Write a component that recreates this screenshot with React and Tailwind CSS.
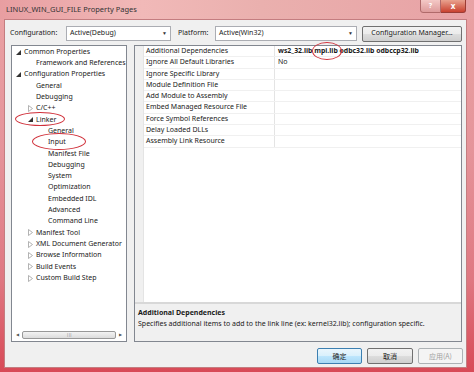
import React from "react";

const Tri = ({ open }) =>
  open ? (
    <svg width="5" height="5" viewBox="0 0 5 5" className="shrink-0">
      <path d="M5 0 L5 5 L0 5 Z" fill="#333" />
    </svg>
  ) : (
    <svg width="5" height="7" viewBox="0 0 5 7" className="shrink-0">
      <path d="M0.5 0.5 L4.5 3.5 L0.5 6.5 Z" fill="none" stroke="#a0a0a0" strokeWidth="0.8" />
    </svg>
  );

const tree = [
  { t: "Common Properties", l: 0, a: "open" },
  { t: "Framework and References", l: 1 },
  { t: "Configuration Properties", l: 0, a: "open" },
  { t: "General", l: 1 },
  { t: "Debugging", l: 1 },
  { t: "C/C++", l: 1, a: "closed" },
  { t: "Linker", l: 1, a: "open" },
  { t: "General", l: 2 },
  { t: "Input", l: 2, sel: true },
  { t: "Manifest File", l: 2 },
  { t: "Debugging", l: 2 },
  { t: "System", l: 2 },
  { t: "Optimization", l: 2 },
  { t: "Embedded IDL", l: 2 },
  { t: "Advanced", l: 2 },
  { t: "Command Line", l: 2 },
  { t: "Manifest Tool", l: 1, a: "closed" },
  { t: "XML Document Generator", l: 1, a: "closed" },
  { t: "Browse Information", l: 1, a: "closed" },
  { t: "Build Events", l: 1, a: "closed" },
  { t: "Custom Build Step", l: 1, a: "closed" },
];

const props = [
  ["Additional Dependencies", "ws2_32.lib mpi.lib odbc32.lib odbccp32.lib", true],
  ["Ignore All Default Libraries", "No", false],
  ["Ignore Specific Library", "", false],
  ["Module Definition File", "", false],
  ["Add Module to Assembly", "", false],
  ["Embed Managed Resource File", "", false],
  ["Force Symbol References", "", false],
  ["Delay Loaded DLLs", "", false],
  ["Assembly Link Resource", "", false],
];

const indent = ["pl-[4px]", "pl-[16px]", "pl-[28px]"];

export default function App() {
  return (
    <div
      className="relative w-[474px] h-[372px] overflow-hidden flex flex-col font-['Noto_Sans',sans-serif] text-[7px] text-[#1a1a1a] bg-[linear-gradient(180deg,#eaa2a4_0%,#e5949a_40%,#df7882_75%,#d84a57_100%)]"
    >
      {/* Title bar */}
      <div className="relative h-[19px] shrink-0 flex items-center pl-[6px] bg-[linear-gradient(90deg,#e89ea1_0%,#f1b9b8_30%,#eab0ae_55%,#e8a2a5_100%)]">
        <span className="text-[7.5px] text-[#333]">LINUX_WIN_GUI_FILE Property Pages</span>
        <div className="absolute right-[8px] top-[-1px] flex">
          <div className="w-[21px] h-[14px] rounded-bl-[3px] border border-[#b06a6a] bg-[linear-gradient(180deg,#f4c9c6,#de9b9b)] flex items-center justify-center text-[7px] font-bold text-white">?</div>
          <div className="w-[25px] h-[14px] rounded-br-[3px] border border-l-0 border-[#9b3c34] bg-[linear-gradient(180deg,#e9a28f,#c9412f)] flex items-center justify-center text-[8px] font-bold text-white">x</div>
        </div>
      </div>

      {/* Client area */}
      <div className="flex-1 ml-[4px] mr-[7px] mb-[4px] bg-[#f0f0f0] border border-[#c47d80] flex flex-col">
        {/* Config row */}
        <div className="flex items-center h-[17px] mt-[5px] pl-[5px] pr-[4px]">
          <span className="w-[56px]">Configuration:</span>
          <div className="w-[105px] h-[15px] bg-white border border-[#abadb3] flex items-center pl-[3px] pr-[3px] justify-between">
            <span>Active(Debug)</span>
            <span className="text-[5px] text-[#333]">▼</span>
          </div>
          <span className="ml-[7px] w-[37px]">Platform:</span>
          <div className="w-[142px] h-[15px] bg-white border border-[#abadb3] flex items-center pl-[3px] pr-[3px] justify-between">
            <span>Active(Win32)</span>
            <span className="text-[5px] text-[#333]">▼</span>
          </div>
          <div className="ml-[5px] w-[100px] h-[16px] rounded-[2px] border border-[#707070] bg-[linear-gradient(180deg,#f2f2f2_0%,#ebebeb_50%,#dddddd_51%,#cfcfcf_100%)] flex items-center justify-center">
            Configuration Manager...
          </div>
        </div>

        {/* Main */}
        <div className="flex mt-[3px] pl-[6px] pr-[4px] h-[297px]">
          {/* Tree */}
          <div className="relative w-[116px] h-full bg-white border border-[#828790] flex flex-col">
            <div className="flex-1 pt-[0.5px]">
              {tree.map((n, i) => (
                <div key={i} className={`flex items-center h-[11.3px] ${indent[n.l]}`}>
                  <div className="w-[8px] flex items-center">
                    {n.a === "open" && <Tri open />}
                    {n.a === "closed" && <Tri />}
                  </div>
                  <span className="whitespace-nowrap">{n.t}</span>
                </div>
              ))}
            </div>
            {/* h scrollbar */}
            <div className="h-[11px] mb-[1px] flex items-center px-[1px] text-[#555]">
              <div className="w-[9px] flex justify-center text-[4px]">◀</div>
              <div className="flex-1 h-[8px] rounded-[2px] border border-[#989898] bg-[linear-gradient(180deg,#f3f3f3,#dcdcdc)] flex items-center justify-center text-[4px] text-[#777] tracking-[-0.5px]">|||</div>
              <div className="w-[9px] flex justify-center text-[4px]">▶</div>
            </div>
          </div>

          {/* Right */}
          <div className="ml-[7px] flex-1 h-full border border-[#828790] flex flex-col bg-white">
            <div className="flex-1 flex">
              <div className="w-[9px] bg-[#f0f0f0] border-r border-[#e4e4e4]" />
              <div className="flex-1 flex flex-col">
                {props.map(([k, v, b], i) => (
                  <div key={i} className="flex h-[11.3px] border-b border-[#f0f0f0]">
                    <div className="w-[131px] pl-[2px] flex items-center border-r border-[#e4e4e4] whitespace-nowrap">{k}</div>
                    <div className={`flex-1 pl-[3px] flex items-center whitespace-nowrap ${b ? "font-bold text-[6.9px]" : ""}`}>{v}</div>
                  </div>
                ))}
              </div>
            </div>
            <div className="h-[39px] border-t-2 border-[#d8d8d8] bg-[#f0f0f0] pl-[3px] pt-[3px] flex flex-col">
              <span className="font-bold leading-[11px]">Additional Dependencies</span>
              <span className="leading-[11px]">Specifies additional items to add to the link line (ex: kernel32.lib); configuration specific.</span>
            </div>
          </div>
        </div>

        {/* Buttons */}
        <div className="flex justify-end gap-[5px] mt-[6px] pr-[3px] font-['Noto_Sans_CJK_SC',sans-serif]">
          <div className="w-[45px] h-[16px] rounded-[2px] border border-[#3c7fb1] bg-[linear-gradient(180deg,#eaf6fd_0%,#d9f0fc_50%,#bee6fd_51%,#a7d9f5_100%)] flex items-center justify-center text-[7px]">确定</div>
          <div className="w-[46px] h-[16px] rounded-[2px] border border-[#707070] bg-[linear-gradient(180deg,#f2f2f2_0%,#ebebeb_50%,#dddddd_51%,#cfcfcf_100%)] flex items-center justify-center text-[7px]">取消</div>
          <div className="w-[45px] h-[16px] rounded-[2px] border border-[#adb2b5] bg-[#f4f4f4] flex items-center justify-center text-[7px] text-[#a0a0a0]">应用(A)</div>
        </div>
      </div>

      {/* red annotations */}
      <div className="absolute left-[15px] top-[112px] w-[50px] h-[14px] rounded-[50%] border border-[#d0303a]" />
      <div className="absolute left-[32px] top-[133px] w-[54px] h-[17px] rounded-[50%] border border-[#d0303a]" />
      <div className="absolute left-[312px] top-[42px] w-[30px] h-[18px] rounded-[50%] border border-[#d0303a]" />
    </div>
  );
}
